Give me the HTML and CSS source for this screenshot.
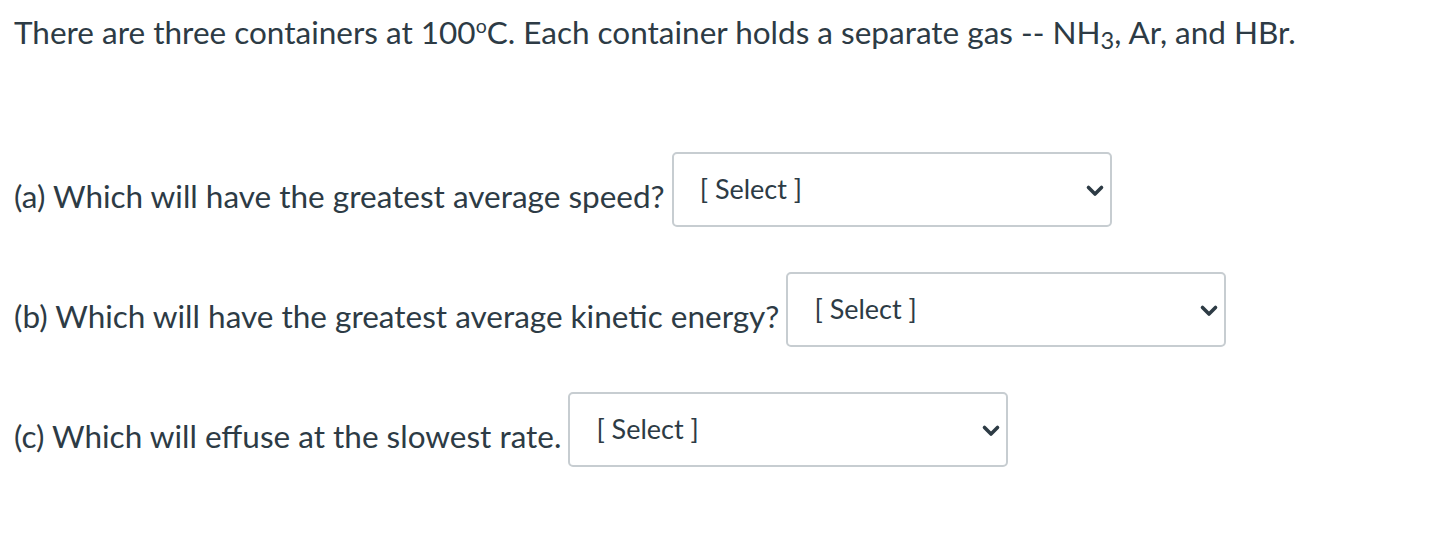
FILE: index.html
```html
<!DOCTYPE html>
<html>
<head>
<meta charset="utf-8">
<link rel="stylesheet" href="styles.css">
</head>
<body>
<div class="page">
  <p class="intro">There are three containers at 100<sup class="deg">o</sup>C. Each container holds a separate gas -- NH<sub>3</sub>, Ar, and HBr.</p>
  <div class="questions">
    <div class="row">
      <span class="label">(a) Which will have the greatest average speed?</span>
      <div class="select">
        <span class="select-text">[ Select ]</span>
        <svg class="chev" width="20" height="14" viewBox="0 0 20 14"><path d="M3.5 3.5 L10 10 L16.5 3.5" fill="none" stroke="#2d3b45" stroke-width="3.6" stroke-linecap="round" stroke-linejoin="round"/></svg>
      </div>
    </div>
    <div class="row">
      <span class="label">(b) Which will have the greatest average kinetic energy?</span>
      <div class="select">
        <span class="select-text">[ Select ]</span>
        <svg class="chev" width="20" height="14" viewBox="0 0 20 14"><path d="M3.5 3.5 L10 10 L16.5 3.5" fill="none" stroke="#2d3b45" stroke-width="3.6" stroke-linecap="round" stroke-linejoin="round"/></svg>
      </div>
    </div>
    <div class="row">
      <span class="label">(c) Which will effuse at the slowest rate.</span>
      <div class="select">
        <span class="select-text">[ Select ]</span>
        <svg class="chev" width="20" height="14" viewBox="0 0 20 14"><path d="M3.5 3.5 L10 10 L16.5 3.5" fill="none" stroke="#2d3b45" stroke-width="3.6" stroke-linecap="round" stroke-linejoin="round"/></svg>
      </div>
    </div>
  </div>
</div>
</body>
</html>
```
FILE: styles.css
```css
html, body {
  margin: 0;
  padding: 0;
  background: #ffffff;
}
body {
  font-family: Lato, "Liberation Sans", sans-serif;
  color: #2d3b45;
}
.page {
  padding: 0 0 0 14px;
}
.intro {
  margin: 0;
  padding-top: 12px;
  font-size: 31.5px;
  line-height: 40px;
}
.deg {
  font-size: 0.62em;
  vertical-align: 0.55em;
  line-height: 0;
}
sub {
  font-size: 0.75em;
  line-height: 0;
  vertical-align: -0.22em;
}
.questions {
  display: flex;
  flex-direction: column;
  gap: 45px;
  margin-top: 100px;
}
.row {
  display: flex;
  align-items: center;
  font-size: 31.5px;
}
.label {
  padding-top: 12px;
  margin-right: 7px;
  white-space: nowrap;
}
.select {
  flex: 0 0 auto;
  box-sizing: border-box;
  width: 440px;
  height: 75px;
  border: 2px solid #c7cdd1;
  border-radius: 5px;
  display: flex;
  align-items: center;
  justify-content: space-between;
  padding: 0 5px 0 26px;
}
.select-text {
  font-size: 27px;
  margin-top: -2px;
}
.chev {
  display: block;
  margin-top: 2px;
}
```
